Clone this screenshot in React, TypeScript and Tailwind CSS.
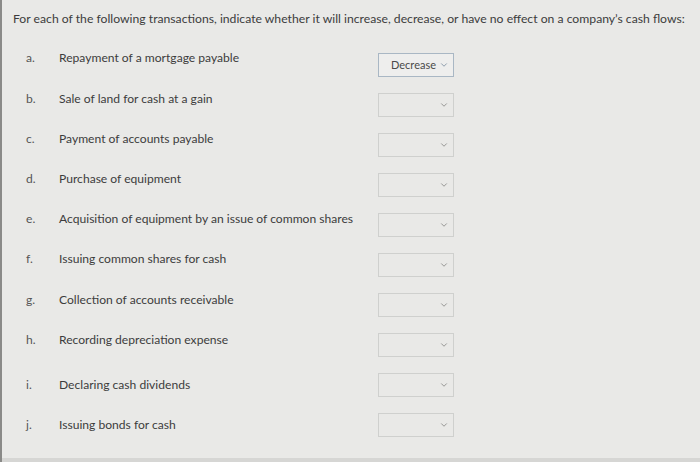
import { ChevronDown } from "lucide-react";

const items = [
  { id: "a", label: "Repayment of a mortgage payable", value: "Decrease", tm: "-mt-[3px]" },
  { id: "b", label: "Sale of land for cash at a gain", value: "", tm: "-mt-[2px]" },
  { id: "c", label: "Payment of accounts payable", value: "", tm: "-mt-[2px]" },
  { id: "d", label: "Purchase of equipment", value: "", tm: "-mt-[2px]" },
  { id: "e", label: "Acquisition of equipment by an issue of common shares", value: "", tm: "-mt-[2px]" },
  { id: "f", label: "Issuing common shares for cash", value: "", tm: "-mt-[2px]" },
  { id: "g", label: "Collection of accounts receivable", value: "", tm: "-mt-[1px]" },
  { id: "h", label: "Recording depreciation expense", value: "", tm: "-mt-[1px]" },
  { id: "i", label: "Declaring cash dividends", value: "", tm: "mt-[4px]" },
  { id: "j", label: "Issuing bonds for cash", value: "", tm: "mt-[4px]" },
];

const App = () => (
  <div className="w-[700px] h-[462px] overflow-hidden bg-[#e9e9e7] border-l-2 border-[#8a8a88] font-['Lato',sans-serif] text-[#3c3c3c] flex flex-col">
    <div className="flex-1 flex flex-col pl-[11px]">
      <p className="mt-[11px] text-[12.2px] leading-4 whitespace-nowrap">
        For each of the following transactions, indicate whether it will increase, decrease, or have no effect on a
        company’s cash flows:
      </p>
      <div className="mt-[26px] flex flex-col">
        {items.map((it) => (
          <div key={it.id} className="h-10 flex items-start">
            <div className={`flex w-[365px] shrink-0 text-[12.1px] leading-4 whitespace-nowrap ${it.tm}`}>
              <span className="w-[34px] pl-[13px] text-[#555]">{it.id}.</span>
              <span className="pl-[12px]">{it.label}</span>
            </div>
            <div
              className={`w-[76px] h-6 flex items-center justify-between pl-[12px] pr-[4px] border ${
                it.value ? "border-[#a9b7c4] bg-[#eeeeed]" : "border-[#cfd0ce] bg-[#e9e9e7]"
              }`}
            >
              <span className="text-[11px] text-[#4a4a4a]">{it.value}</span>
              <ChevronDown size={10} strokeWidth={2.2} className={it.value ? "text-[#8596a6]" : "text-[#8f8f8d]"} />
            </div>
          </div>
        ))}
      </div>
    </div>
    <div className="h-[4px] bg-[#d6d6d4]" />
  </div>
);

export default App;
